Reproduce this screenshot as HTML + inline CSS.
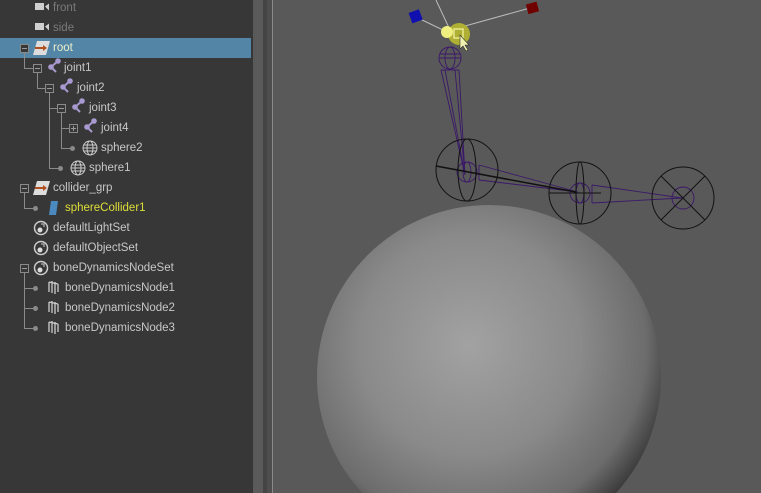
<!DOCTYPE html>
<html><head><meta charset="utf-8"><style>
html,body{margin:0;padding:0;width:761px;height:493px;overflow:hidden;background:#595959;font-family:"Liberation Sans",sans-serif;}
#ol{position:absolute;left:0;top:0;width:253px;height:493px;background:#373737;overflow:hidden;}
.t{position:absolute;font-size:11.5px;color:#c8c8c8;line-height:20px;white-space:nowrap;}
.sel{position:absolute;left:0;top:38px;width:251px;height:20px;background:#5285a6;}
.bx{position:absolute;width:7px;height:7px;border:1px solid #8a8a8a;background:#373737;}
.bx:after{content:"";position:absolute;left:1px;top:3px;width:5px;height:1px;background:#9a9a9a;}
.pl:before{content:"";position:absolute;left:3px;top:1px;width:1px;height:5px;background:#9a9a9a;}
.ln{position:absolute;background:#8a8a8a;}
.dot{position:absolute;width:5px;height:5px;border-radius:50%;background:#8a8a8a;}
</style></head><body>
<div id="ol">
<div class="sel"></div>
<div class="ln" style="left:24px;top:52px;width:1px;height:16px"></div>
<div class="ln" style="left:24px;top:68px;width:9px;height:1px"></div>
<div class="ln" style="left:37px;top:72px;width:1px;height:16px"></div>
<div class="ln" style="left:37px;top:88px;width:8px;height:1px"></div>
<div class="ln" style="left:49px;top:92px;width:1px;height:76px"></div>
<div class="ln" style="left:49px;top:108px;width:8px;height:1px"></div>
<div class="ln" style="left:49px;top:168px;width:10px;height:1px"></div>
<div class="ln" style="left:61px;top:112px;width:1px;height:36px"></div>
<div class="ln" style="left:61px;top:128px;width:8px;height:1px"></div>
<div class="ln" style="left:61px;top:148px;width:10px;height:1px"></div>
<div class="dot" style="left:70px;top:146px"></div>
<div class="dot" style="left:58px;top:166px"></div>
<div class="ln" style="left:24px;top:192px;width:1px;height:16px"></div>
<div class="ln" style="left:24px;top:208px;width:10px;height:1px"></div>
<div class="dot" style="left:33px;top:206px"></div>
<div class="ln" style="left:24px;top:272px;width:1px;height:56px"></div>
<div class="ln" style="left:24px;top:288px;width:10px;height:1px"></div>
<div class="ln" style="left:24px;top:308px;width:10px;height:1px"></div>
<div class="ln" style="left:24px;top:328px;width:10px;height:1px"></div>
<div class="dot" style="left:33px;top:286px"></div>
<div class="dot" style="left:33px;top:306px"></div>
<div class="dot" style="left:33px;top:326px"></div>
<div class="bx" style="left:20px;top:44px"></div>
<div class="bx" style="left:33px;top:64px"></div>
<div class="bx" style="left:45px;top:84px"></div>
<div class="bx" style="left:57px;top:104px"></div>
<div class="bx pl" style="left:69px;top:124px"></div>
<div class="bx" style="left:20px;top:184px"></div>
<div class="bx" style="left:20px;top:264px"></div>
<svg style="position:absolute;left:0;top:0" width="253" height="340">
<g fill="#cfcfcf"><rect x="35" y="3" width="9" height="7"/><path d="M45 6.5l4-3v7z"/><rect x="35" y="23" width="9" height="7"/><path d="M45 26.5l4-3v7z"/></g>
<g><path d="M37 41h13l-4 14h-13z" fill="#ddd"/><path d="M35 48h9" stroke="#b05020" stroke-width="2"/><path d="M43 45l4 3l-4 3z" fill="#b05020"/>
<path d="M37 181h13l-4 14h-13z" fill="#ddd"/><path d="M35 188h9" stroke="#b05020" stroke-width="2"/><path d="M43 185l4 3l-4 3z" fill="#b05020"/></g>
<g stroke="#a89ad0" stroke-width="2" fill="#a89ad0">
<path d="M58 61l-7 6l5 5" fill="none"/><circle cx="58" cy="61" r="1.8"/><circle cx="51" cy="67" r="1.8"/>
<path d="M70 81l-7 6l5 5" fill="none"/><circle cx="70" cy="81" r="1.8"/><circle cx="63" cy="87" r="1.8"/>
<path d="M82 101l-7 6l5 5" fill="none"/><circle cx="82" cy="101" r="1.8"/><circle cx="75" cy="107" r="1.8"/>
<path d="M94 121l-7 6l5 5" fill="none"/><circle cx="94" cy="121" r="1.8"/><circle cx="87" cy="127" r="1.8"/>
</g>
<g stroke="#ccc" fill="none" stroke-width="1"><circle cx="90" cy="148" r="7"/><ellipse cx="90" cy="148" rx="3" ry="7"/><path d="M83 148h14M84 145h12M84 151h12"/>
<circle cx="78" cy="168" r="7"/><ellipse cx="78" cy="168" rx="3" ry="7"/><path d="M71 168h14M72 165h12M72 171h12"/></g>
<path d="M51 201h7l-2 14h-7z" fill="#4a8ac0"/>
<g><circle cx="41" cy="228" r="6.5" fill="none" stroke="#ccc" stroke-width="1.5"/><circle cx="40" cy="230" r="2.5" fill="#ddd"/><path d="M41 224h3v3" stroke="#ccc" fill="none"/>
<circle cx="41" cy="248" r="6.5" fill="none" stroke="#ccc" stroke-width="1.5"/><circle cx="40" cy="250" r="2.5" fill="#ddd"/><path d="M41 244h3v3" stroke="#ccc" fill="none"/>
<circle cx="41" cy="268" r="6.5" fill="none" stroke="#ccc" stroke-width="1.5"/><circle cx="40" cy="270" r="2.5" fill="#ddd"/><path d="M41 264h3v3" stroke="#ccc" fill="none"/></g>
<g fill="none" stroke="#ccc" stroke-width="1.3">
<path d="M49 282v10M52 281v12M55 282v12M58 284v8M49 282l9 2"/>
<path d="M49 302v10M52 301v12M55 302v12M58 304v8M49 302l9 2"/>
<path d="M49 322v10M52 321v12M55 322v12M58 324v8M49 322l9 2"/></g>
</svg>
<div class="t" style="left:53px;top:-2px;color:#7a7a7a">front</div>
<div class="t" style="left:53px;top:18px;color:#7a7a7a">side</div>
<div class="t" style="left:53px;top:38px;color:#eeeecc">root</div>
<div class="t" style="left:64px;top:58px">joint1</div>
<div class="t" style="left:77px;top:78px">joint2</div>
<div class="t" style="left:89px;top:98px">joint3</div>
<div class="t" style="left:101px;top:118px">joint4</div>
<div class="t" style="left:101px;top:138px">sphere2</div>
<div class="t" style="left:89px;top:158px">sphere1</div>
<div class="t" style="left:53px;top:178px">collider_grp</div>
<div class="t" style="left:65px;top:198px;color:#dede38">sphereCollider1</div>
<div class="t" style="left:53px;top:218px">defaultLightSet</div>
<div class="t" style="left:53px;top:238px">defaultObjectSet</div>
<div class="t" style="left:53px;top:258px">boneDynamicsNodeSet</div>
<div class="t" style="left:65px;top:278px">boneDynamicsNode1</div>
<div class="t" style="left:65px;top:298px">boneDynamicsNode2</div>
<div class="t" style="left:65px;top:318px">boneDynamicsNode3</div>
</div>
<div style="position:absolute;left:253px;top:0;width:10px;height:493px;background:#5a5a5a"></div>
<div style="position:absolute;left:263px;top:0;width:4px;height:493px;background:#444"></div>
<div style="position:absolute;left:267px;top:0;width:5px;height:493px;background:#4e4e4e"></div>
<div style="position:absolute;left:272px;top:0;width:1px;height:493px;background:#8a8a8a"></div>
<svg style="position:absolute;left:273px;top:0;overflow:hidden" width="488" height="493" viewBox="273 0 488 493">
<defs><radialGradient id="g" cx="470" cy="345" r="245" gradientUnits="userSpaceOnUse"><stop offset="0" stop-color="#a2a2a2"/><stop offset="0.45" stop-color="#8a8a8a"/><stop offset="0.72" stop-color="#6c6c6c"/><stop offset="0.85" stop-color="#3a3a3a"/><stop offset="1" stop-color="#202020"/></radialGradient></defs>
<circle cx="489" cy="377" r="172" fill="url(#g)"/>
<g stroke="#bbb" stroke-width="1"><line x1="436" y1="0" x2="450" y2="30"/><line x1="418" y1="18" x2="445" y2="31"/><line x1="530" y1="8" x2="465" y2="26"/></g>
<rect x="410" y="11" width="11" height="11" fill="#1010b0" transform="rotate(-20 415 16)"/>
<rect x="527" y="3" width="11" height="10" fill="#700000" transform="rotate(-15 532 8)"/>
<circle cx="459" cy="34" r="11" fill="#b8b830" opacity="0.9"/>
<circle cx="447" cy="32" r="6" fill="#f0f080"/>
<rect x="454" y="29" width="9" height="9" fill="none" stroke="#e8e890" stroke-width="1.5"/>
<path d="M460 35l0 14l3-3l3 5l2-1l-3-5l4 0z" fill="#f0f0b0" stroke="#333" stroke-width="0.6"/>
<g fill="none" stroke="#3a1868" stroke-width="0.9">
<circle cx="450" cy="58" r="11"/><ellipse cx="450" cy="58" rx="5" ry="11"/><path d="M439 58h22M440 54h20"/>
<path d="M441 70l24 105M459 70l6 105M445 70l20 105M455 70l10 105M441 70h18"/>
<circle cx="467" cy="172" r="10"/><ellipse cx="467" cy="172" rx="4" ry="10"/>
<path d="M479 165l99 27M479 180l99 12M479 165v15"/>
<circle cx="580" cy="193" r="10"/><ellipse cx="580" cy="193" rx="4" ry="10"/>
<path d="M592 185l90 13M592 203l90-5M592 185v18"/>
<circle cx="683" cy="198" r="11"/>
</g>
<g fill="none" stroke="#111" stroke-width="1">
<circle cx="467" cy="170" r="31"/><ellipse cx="467" cy="170" rx="9" ry="31"/><path d="M436 166l140 26" stroke-width="1.5"/>
<circle cx="580" cy="193" r="31"/><ellipse cx="580" cy="193" rx="4" ry="31"/><path d="M549 193h52"/>
<circle cx="683" cy="198" r="31"/><path d="M661 176l44 44M661 220l44-44"/></g>
</svg>
</body></html>
